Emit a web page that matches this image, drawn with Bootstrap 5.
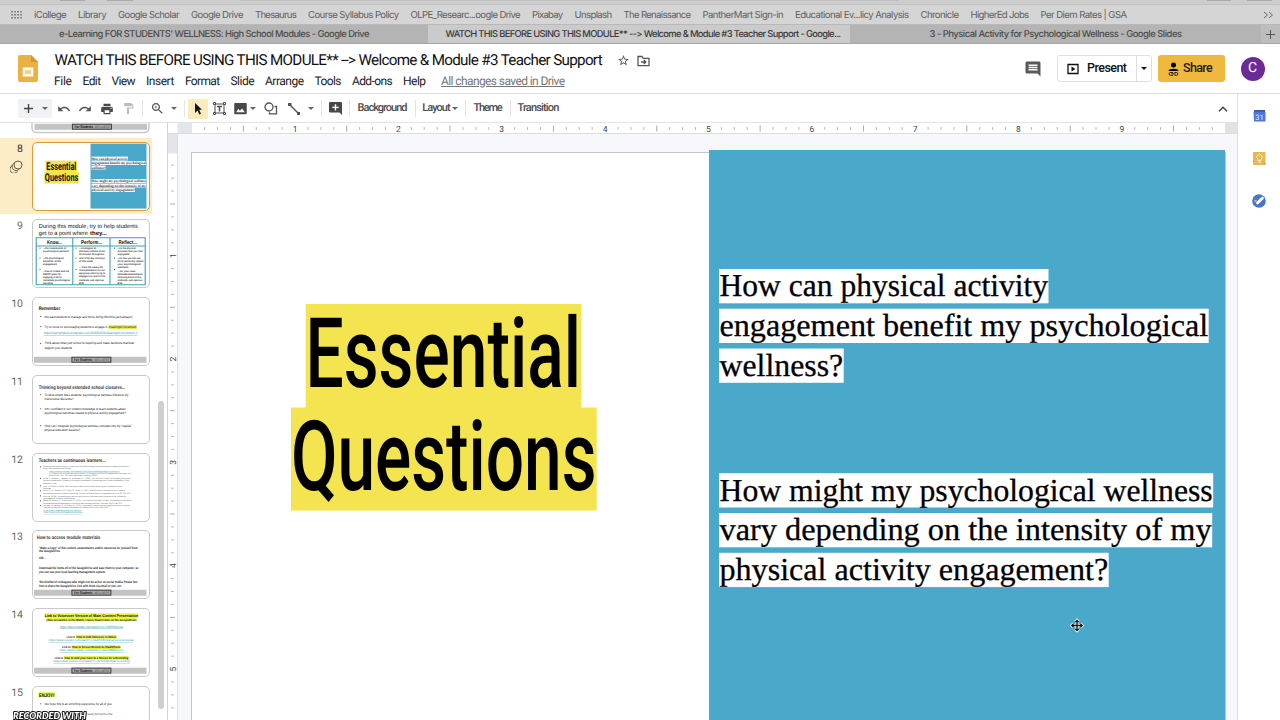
<!DOCTYPE html>
<html lang="en">
<head>
<meta charset="utf-8">
<title>Welcome &amp; Module #3 Teacher Support - Google Slides</title>
<link rel="stylesheet" href="https://cdn.jsdelivr.net/npm/bootstrap@5.3.0/dist/css/bootstrap.min.css">
<style>
body{width:1280px;height:720px;overflow:hidden;background:#fff;font-family:Roboto,"Liberation Sans",sans-serif;color:#222;text-rendering:geometricPrecision}
svg{display:block;flex:none}
svg text{text-rendering:geometricPrecision}
.fit{white-space:nowrap;display:inline-block;flex:none;font-variant-ligatures:none;font-feature-settings:"calt" 0}
.browser-edge{height:5px;background:#cdcdcd;border-bottom:1px solid #c2c2c2}
.bookmarks{height:19px;padding-left:34px;gap:12px;background:#d5d5d5;font:9.6px Inter,sans-serif;color:#606060;position:relative;padding-top:1px}
.apps-dots{position:absolute;left:11px;top:6px}
.more-marks{position:absolute;right:6px;top:6px}
.tabs{height:20px;font:500 9.4px Inter,sans-serif;color:#4c4c4c;background:#b4b4b4;border-top:1px solid #b9b9b9;border-bottom:1px solid #a6a6a6}
.tab-a{width:428px}.tab-b{width:422px;background:#cbcbcb;color:#3a3a3a}.tab-c{width:411px}.tab-plus{width:19px;background:#bdbdbd}
.doc-head{height:50px;border-bottom:1px solid #dcdcdc;padding-left:17.5px}
.doc-info{margin-left:17px;padding-top:7px}
.doc-title{height:19px;font-size:15.2px;line-height:19px;color:#111}
.menu-row{height:20px;gap:11px;font-size:12px;line-height:20px;color:#222;padding-top:1px;margin-left:-.5px}
.saved{color:#777;text-decoration:underline;margin-left:4.5px}
.btn-present,.btn-share{height:27px;font-size:12.5px;font-weight:500;border-radius:3px;padding:0}
.btn-present{width:95px;border:1px solid #dddfe3;color:#111;background:#fff}
.btn-present .split{width:15px;border-left:1px solid #dddfe3}
.btn-share{width:67px;background:#efb93f;color:#201a08;margin-left:6px}
.avatar{width:24px;height:24px;border-radius:50%;background:#6b2a96;color:#fff;font-size:14px;margin:0 15.5px 0 15.5px}
.work{height:626px}
.main-pane{width:1238px;border-right:1px solid #dfdfdf}
.side-pane{width:42px;padding-top:15px}
.toolbar-grid{height:29px;padding-left:18px;display:grid;grid-template-columns:20px 14px 24px 18px 26px 16px 12px 18px 15px 7px 20px 22px 20px 6px 30px 16px 18px 2px 26px 2px 64px 2px 48px 2px 43px 2px 54px 1fr 31px;font-size:11px;font-weight:500;color:#4c4d4f;border-bottom:1px solid #e2e3e5}
.toolbar-grid>*{display:flex;align-items:center;justify-content:center;height:29px}
.vline{width:1px;height:17px;background:#e4e4e4}
.new-a,.new-b{background:#f1f2f6;height:19px!important;align-self:center}
.picked{background:#fcebbd;height:20px!important;align-self:center}
.film{width:168px;height:597px;border-right:1px solid #d3d3d3;background:#fff;position:relative}
.film-row{width:152px;height:75.6px;margin-bottom:2.15px;padding-top:3.6px;font-size:10.5px;color:#666}
.film-row.active{background:#fcedc6;color:#333}
.film-num{width:31.5px;padding-right:8.500px;text-align:right;line-height:13px}
.film-thumb{width:118px;height:69px;border:1.5px solid #c9c9cd;border-radius:5px;overflow:hidden;background:#fff}
.active .film-thumb{border-color:#d99b3a}
.scroll-pill{position:absolute;right:3.500px;top:278px;width:6px;height:308px;border-radius:3px;background:#cfcfcf}
.stage{width:1069px;background:#f7f8fb}
.rec-mark{position:fixed;left:13px;top:709px;z-index:5}
</style>
</head>
<body class="d-flex flex-column">
<div class="browser-edge flex-shrink-0"><svg width="1280" height="2"><path d="M60 .5h25M107 .5h26M1207 .5h24M1247 .5h25" stroke="#aaa"/><path d="M240 .5h658" stroke="#bdbdbd"/></svg></div>
<div class="bookmarks d-flex align-items-center flex-shrink-0">
<svg class="apps-dots" width="12" height="8"><path d="M1 0v8M4 0v8M7 0v8M10 0v8" stroke="#666" stroke-width="1.4" stroke-dasharray="1.4 1.6"/></svg>
<span class="fit" data-w="32">iCollege</span><span class="fit" data-w="28">Library</span><span class="fit" data-w="61">Google Scholar</span><span class="fit" data-w="52">Google Drive</span><span class="fit" data-w="41">Thesaurus</span><span class="fit" data-w="90.5">Course Syllabus Policy</span><span class="fit" data-w="109.5">OLPE_Researc...oogle Drive</span><span class="fit" data-w="30.5">Pixabay</span><span class="fit" data-w="37">Unsplash</span><span class="fit" data-w="67">The Renaissance</span><span class="fit" data-w="80.5">PantherMart Sign-in</span><span class="fit" data-w="113.5">Educational Ev...licy Analysis</span><span class="fit" data-w="38">Chronicle</span><span class="fit" data-w="58">HigherEd Jobs</span><span class="fit" data-w="86">Per Diem Rates | GSA</span>
<svg class="more-marks" width="11" height="8"><path d="M1 1l3.5 3L1 7M6 1l3.5 3L6 7" fill="none" stroke="#666"/></svg>
</div>
<div class="tabs d-flex flex-shrink-0">
<div class="tab-a d-flex align-items-center justify-content-center"><span class="fit" data-w="310">e-Learning FOR STUDENTS' WELLNESS: High School Modules - Google Drive</span></div>
<div class="tab-b d-flex align-items-center justify-content-center ps-2"><span class="fit" data-w="395">WATCH THIS BEFORE USING THIS MODULE** --&gt; Welcome &amp; Module #3 Teacher Support - Google...</span></div>
<div class="tab-c d-flex align-items-center justify-content-center"><span class="fit" data-w="252">3 - Physical Activity for Psychological Wellness - Google Slides</span></div>
<div class="tab-plus d-flex align-items-center justify-content-center"><svg width="9" height="9"><path d="M4.5 0v9M0 4.5h9" stroke="#555"/></svg></div>
</div>
<header class="doc-head d-flex flex-shrink-0">
<svg width="20" height="27" viewBox="0 0 20 27" style="margin-top:11px"><path d="M2 0h11l7 7v18a2 2 0 0 1-2 2H2a2 2 0 0 1-2-2V2a2 2 0 0 1 2-2z" fill="#e9b243"/><path d="M13 0l7 7h-7z" fill="#d09a35"/><path d="M5.800 13.700h8.400v6.600H5.800z" fill="#f6d58a" stroke="#fff" stroke-width="2.200"/></svg>
<div class="doc-info">
<div class="doc-title d-flex align-items-center"><span class="fit" data-w="547.5">WATCH THIS BEFORE USING THIS MODULE** --&gt; Welcome &amp; Module #3 Teacher Support</span>
<svg style="margin-left:14.500px" width="13" height="13" viewBox="0 0 24 24" fill="#555"><path d="M22 9.240l-7.190-.62L12 2 9.190 8.630 2 9.240l5.460 4.730L5.820 21 12 17.270 18.180 21l-1.630-7.030L22 9.240zM12 15.400l-3.760 2.270 1-4.280-3.320-2.880 4.380-.38L12 6.100l1.710 4.040 4.380.38-3.320 2.880 1 4.280L12 15.400z"/></svg>
<svg style="margin-left:7px" width="13" height="12" viewBox="0 0 13 12" fill="none" stroke="#555" stroke-width="1.300"><path d="M1 2.200V1.500h4l1.200 1.900H12v7.200H1z"/><path d="M4 7h4.500M6.800 5l2 2-2 2"/></svg></div>
<nav class="menu-row d-flex"><span class="fit" data-w="17.5">File</span><span class="fit" data-w="18">Edit</span><span class="fit" data-w="23.5">View</span><span class="fit" data-w="28">Insert</span><span class="fit" data-w="34.5">Format</span><span class="fit" data-w="23.5">Slide</span><span class="fit" data-w="38.5">Arrange</span><span class="fit" data-w="26.5">Tools</span><span class="fit" data-w="40">Add-ons</span><span class="fit" data-w="22.5">Help</span><span class="fit saved" data-w="123.5">All changes saved in Drive</span></nav>
</div>
<div class="ms-auto d-flex align-items-center" style="height:49px">
<svg width="18" height="18" viewBox="0 0 24 24" fill="#58595b" style="margin-right:15px"><path d="M21.990 4c0-1.100-.89-2-1.990-2H4c-1.100 0-2 .9-2 2v12c0 1.100.9 2 2 2h14l4 4-.01-18zM18 14H6v-2h12v2zm0-3H6V9h12v2zm0-3H6V6h12v2z"/></svg>
<button class="btn btn-present d-flex align-items-center"><svg style="margin:0 8px 0 9px" width="12" height="12"><path d="M1 1.500h10v9H1z" fill="none" stroke="#111" stroke-width="1.300"/><path d="M4.500 3.600v4.800L8.500 6z" fill="#111"/></svg><span class="fit" data-w="39.5">Present</span><span class="split ms-auto h-100 d-flex align-items-center justify-content-center"><svg width="6" height="3"><path d="M0 0h6L3 3z" fill="#111"/></svg></span></button>
<button class="btn btn-share d-flex align-items-center"><svg style="margin:0 4px 0 9px" width="11" height="14"><circle cx="5.500" cy="3" r="2.500"/><path d="M.5 9c0-3 10-3 10 0z"/><path d="M5 10.500H2.500a1.400 1.400 0 0 0 0 2.800H5M6.500 10.500H8.500a1.400 1.400 0 0 1 0 2.800H6.500M3.500 11.900h4" fill="none" stroke="#201a08"/></svg><span class="fit" data-w="29">Share</span></button>
<div class="avatar d-flex align-items-center justify-content-center">C</div>
</div>
</header>
<div class="work d-flex flex-shrink-0">
<div class="main-pane">
<div class="toolbar-grid">
<span class="new-a"><svg width="9" height="9"><path d="M4.500 0v9M0 4.500h9" stroke="#444" stroke-width="1.400"/></svg></span>
<span class="new-b"><svg width="6" height="3"><path d="M0 0h6L3 3z" fill="#666"/></svg></span>
<span><svg width="14" height="14" viewBox="0 0 24 24" fill="#555"><path d="M12.500 8c-2.650 0-5.050.99-6.900 2.600L2 7v9h9l-3.620-3.620c1.390-1.160 3.160-1.880 5.120-1.880 3.540 0 6.550 2.310 7.600 5.500l2.370-.78C21.080 11.030 17.150 8 12.500 8z"/></svg></span>
<span><svg width="14" height="14" viewBox="0 0 24 24" fill="#555"><path d="M18.400 10.600C16.550 8.990 14.150 8 11.500 8c-4.650 0-8.580 3.030-9.960 7.220L3.900 16c1.050-3.190 4.050-5.500 7.600-5.500 1.950 0 3.730.72 5.120 1.880L13 16h9V7l-3.600 3.600z"/></svg></span>
<span><svg width="14" height="14" viewBox="0 0 24 24" fill="#484848"><path d="M19 8H5c-1.660 0-3 1.340-3 3v6h4v4h12v-4h4v-6c0-1.660-1.340-3-3-3zm-3 11H8v-5h8v5zm3-7c-.55 0-1-.45-1-1s.45-1 1-1 1 .45 1 1-.45 1-1 1zm-1-9H6v4h12V3z"/></svg></span>
<span><svg width="13" height="13" viewBox="0 0 24 24" fill="#bbb"><path d="M18 4V3c0-.55-.45-1-1-1H5c-.55 0-1 .45-1 1v4c0 .55.45 1 1 1h12c.55 0 1-.45 1-1V6h1v4H9v11c0 .55.45 1 1 1h2c.55 0 1-.45 1-1v-9h8V4h-3z"/></svg></span>
<span><i class="vline"></i></span>
<span><svg width="15" height="15" viewBox="0 0 24 24" fill="#555"><path d="M15.500 14h-.79l-.28-.27C15.410 12.590 16 11.110 16 9.500 16 5.910 13.090 3 9.500 3S3 5.910 3 9.500 5.910 16 9.500 16c1.610 0 3.090-.59 4.230-1.570l.27.28v.79l5 4.990L20.490 19l-4.990-5zm-6 0C7.010 14 5 11.990 5 9.500S7.010 5 9.500 5 14 7.010 14 9.500 11.990 14 9.500 14zm2.500-4h-2v2H9v-2H7V9h2V7h1v2h2v1z"/></svg></span>
<span><svg width="6" height="3"><path d="M0 0h6L3 3z" fill="#666"/></svg></span>
<span><i class="vline"></i></span>
<span class="picked"><svg width="9" height="12"><path d="M1 0l7 6.800H5.200L7 10.700 5.300 11.500 3.600 7.500 1 10z" fill="#111"/></svg></span>
<span><svg width="13" height="13" fill="none" stroke="#4d4d4d"><path d="M2 2h9v9H2z"/><path d="M4 4.500h5M6.500 4.500v5" stroke-width="1.500"/><path d="M.5.5h2v2h-2zM10.500.5h2v2h-2zM.5 10.500h2v2h-2zM10.500 10.500h2v2h-2z" fill="#fff"/></svg></span>
<span><svg width="15" height="15" viewBox="0 0 24 24" fill="#484848"><path fill-rule="evenodd" d="M22 19.500V4.500c0-1-.9-1.500-1.500-1.500h-17C2.500 3 2 3.800 2 4.500v15c0 1 .8 1.500 1.500 1.500h17c1 0 1.500-.9 1.500-1.500zM8.500 12.500l2.500 3L14.500 12l4.500 6H5z"/></svg></span>
<span><svg width="6" height="3"><path d="M0 0h6L3 3z" fill="#666"/></svg></span>
<span><svg width="14" height="13" fill="none" stroke="#555" stroke-width="1.300"><circle cx="5" cy="5" r="4"/><path d="M10.500 4.500h2v7.300H5.500v-1.500"/></svg></span>
<span><svg width="12" height="12"><path d="M2 2l8.500 8.500" stroke="#555" stroke-width="1.400"/><path d="M0 0h3.500v3H0zM9 9h3v3H9z" fill="#555"/></svg></span>
<span><svg width="6" height="3"><path d="M0 0h6L3 3z" fill="#666"/></svg></span>
<span><i class="vline"></i></span>
<span><svg width="13" height="13"><path d="M1 0h11a1 1 0 0 1 1 1v12l-2.500-2.500H1a1 1 0 0 1-1-1V1a1 1 0 0 1 1-1z" fill="#484848"/><path d="M6.500 2.200v6.400M3.300 5.400h6.400" stroke="#fff" stroke-width="1.400"/></svg></span>
<span><i class="vline"></i></span>
<span><b class="fit fw-medium" data-w="49">Background</b></span>
<span><i class="vline"></i></span>
<span><b class="fit fw-medium" data-w="27.5">Layout</b><svg style="margin-left:2px" width="6" height="3"><path d="M0 0h6L3 3z" fill="#666"/></svg></span>
<span><i class="vline"></i></span>
<span><b class="fit fw-medium" data-w="28">Theme</b></span>
<span><i class="vline"></i></span>
<span><b class="fit fw-medium" data-w="41">Transition</b></span>
<span></span>
<span class="pe-0"><svg style="margin-left:2px" width="10" height="6"><path d="M1 5.300l4-4 4 4" fill="none" stroke="#444" stroke-width="1.500"/></svg></span>
</div>
<div class="d-flex">
<aside class="film overflow-hidden" id="film"><div class="scroll-pill"></div></aside>
<svg class="stage" id="stage" width="1069" height="597" viewBox="168 123 1069 597"></svg>
</div>
</div>
<aside class="side-pane d-flex flex-column align-items-center">
<svg width="13" height="13"><path d="M1 1h11v3H1z" fill="#3c5fb8"/><path d="M.5 3h12v9.500H1z" fill="#4a78dc"/><text x="2.300" y="10.500" font-size="7.500" fill="#e6eeff" font-family="Roboto">31</text></svg>
<svg width="13" height="13" style="margin-top:29.500px"><path d="M1 0h11.500v9L9.500 13H1a1 1 0 0 1-1-1V1a1 1 0 0 1 1-1z" fill="#e6b94c"/><path d="M12.500 9.200v3.600H9.500z" fill="#c99526"/><path d="M5 8.500V7.200a2.600 2.600 0 1 1 3 0v1.300zM5 10.200h3" fill="none" stroke="#fdf0cc"/></svg>
<svg width="14" height="14" style="margin-top:29px"><circle cx="7" cy="7" r="6.800" fill="#4475d4"/><path d="M5.500 9l5-5" stroke="#fff" stroke-width="2.800" stroke-linecap="round"/><circle cx="3.600" cy="7" r="1.300" fill="#dcb353"/></svg>
</aside>
</div>
<svg class="rec-mark" width="76" height="11"><text x="0" y="10" font-family="Lato,Roboto,sans-serif" font-weight="900" font-style="italic" font-size="9.500" textLength="73" lengthAdjust="spacingAndGlyphs" fill="#fff" stroke="#1a1a1a" stroke-width="2.200" paint-order="stroke" stroke-linejoin="round">RECORDED WITH</text></svg>
<script>
const esc = s => s.replace(/&/g,'&amp;').replace(/</g,'&lt;');
const SANS = "'Liberation Sans',Arial,sans-serif";
// One line of slide text: left, baseline, advance width, size, string, extra attributes.
function T(x, y, w, size, s, extra = '') {
  return `<text x="${x}" y="${y}" textLength="${w}" lengthAdjust="spacingAndGlyphs" font-size="${size}" ${extra}>${esc(s)}</text>`;
}
const R = (x, y, w, h, fill, extra = '') => `<rect x="${x}" y="${y}" width="${w}" height="${h}" fill="${fill}" ${extra}/>`;
const dot = (x, y) => `<circle cx="${x}" cy="${y}" r=".6" fill="#444"/>`;
const link = 'fill="#2b96a5" text-decoration="underline"';
const footer = y => R(34.5, y, 112.5, 6, '#c3c3c3') + R(72.4, y + .4, 39, 5, '#aaa', 'stroke="#333" stroke-width=".9"') +
  T(74.5, y + 4.3, 18.5, 3.8, 'For Students', 'font-weight="700"') + T(94.8, y + 4.3, 14.7, 3.4, 'WELLNESS', 'fill="#444"');

// The full-size slide.
const slide = R(709, 150, 516, 584, '#4aa9cb') +
  R(305.7, 304, 275.8, 104, '#f3e450') + R(291, 407.5, 305.7, 103, '#f3e450') +
  `<g font-family="Roboto" font-weight="500" fill="#000">` +
  T(305.5, 386.5, 275.5, 97.5, 'Essential') + T(291, 490, 305.5, 97.5, 'Questions') + '</g>' +
  [[269,329.5,'How can physical activity'],[308.7,489.7,'engagement benefit my psychological'],[348.5,124.7,'wellness?'],
   [473.2,494.2,'How might my psychological wellness'],[513,493.2,'vary depending on the intensity of my'],[552.8,389.7,'physical activity engagement?']]
  .map(([y, w, s]) => R(719, y, w, 34.3, '#fff') + T(719.5, y + 27.3, w - 1, 32, s, `font-family="'Liberation Serif',serif" fill="#000" stroke="#000" stroke-width=".3"`)).join('');

const thumbs = {
  8: R(91, 144.5, 56, 65, '#4aa9cb') + R(46, 161.5, 31.5, 12, '#f3e450') + R(44.8, 173, 34.5, 11.5, '#f3e450') +
     '<g font-family="Roboto" font-weight="700" fill="#111">' + T(46.8, 170.9, 30, 10.8, 'Essential') + T(45.3, 182.4, 33.500, 10.8, 'Questions') + '</g>' +
     [[157.5,36.5,'How can physical activity'],[162,54.5,'engagement benefit my psychological'],[166.5,14,'wellness?'],[180,54.5,'How might my psychological wellness'],[184.5,54.5,'vary depending on the intensity of my'],[189,43.5,'physical activity engagement?']]
     .map(([y, w, s]) => R(92, y, w, 3.9, '#f4f8fa') + T(92, y + 3.1, w, 3.5, s, `font-family="'Liberation Serif',serif" font-weight="700" fill="#444"`)).join(''),
  9: T(39.3, 229.4, 99, 5.9, 'During this module, try to help students') + T(39.3, 236.4, 49, 5.9, 'get to a point where') + T(90.500, 236.4, 17, 5.9, 'they...', 'font-weight="700"') +
     '<path d="M36.700 238.700h109v47h-109zM36.700 247h109M73.300 238.700v47M110.500 238.700v47" fill="none" stroke="#3f9fb0" stroke-width="1.100"/>' +
     T(47.5, 244.900, 15, 5.4, 'Know...', 'font-weight="700"') + T(81.500, 244.900, 21, 5.4, 'Perform...', 'font-weight="700"') + T(119, 244.900, 18.5, 5.4, 'Reflect...', 'font-weight="700"') +
     [[43.5,[250,23,'...the components of'],[253.2,26,'psychological wellness'],[259.5,21,'...the psychological'],[262.7,18,'benefits of PA'],[266,14,'engagement'],[272.500,26,'...how to create and set'],[275.7,18,'SMART goals for'],[278.8,19,'engaging in PA for'],[281.8,27,'immediate psychological'],[284.7,10,'benefits']],
      [79.500,[250,17,'...strategies to'],[253.200,26,'potentially balance stress'],[256.400,25,'30 minutes throughout'],[259.600,26,'most of the day, most days'],[262.800,14,'of the week'],[268.500,24,'..."track the weekly PA'],[271.700,26,'recommendations for your'],[275,26,'age group while trying to'],[278.300,26,'engage in a rest of the'],[281.500,25,'moderate, and vigorous'],[284.700,5,'PA']],
      [118,[250,18,'...on the physical'],[253.200,25,'activities that you find'],[256.400,12,'enjoyable'],[259.600,23,'...on how you can use'],[262.800,26,'PA to positively impact'],[266,23,'your psychological'],[269.200,11,'wellness'],[272.500,18,'...on your own'],[275.700,25,'attitudes/emotions'],[278.800,24,'following bouts of low,'],[281.800,25,'moderate, and vigorous'],[284.700,5,'PA']]]
     .map(([x, ...ls]) => dot(x - 3, 249) + dot(x - 3, 259) + dot(x - 3, 270.5) + ls.map(([y, w, s]) => T(x, y, w, 2.6, s, 'font-weight="700" fill="#333"')).join('')).join(''),
  10: T(39.3, 311.200, 21.500, 5, 'Remember', 'font-weight="700"') + dot(41.2, 317.2) + T(45, 318.600, 88, 3.3, 'We want students to manage and thrive during this time (and always!)') +
      dot(41.2, 327.3) + T(45, 328.600, 63, 3.3, 'Try to focus on encouraging students to engage in') + R(109, 325.800, 28.2, 3.900, '#e5ed55') + T(109.3, 328.600, 27.500, 3.3, 'meaningful movement') +
      T(44.3, 335.200, 93.5, 3.3, 'https://openphysed.wordpress.com/2020/03/29/meaningful-movement-2', link) +
      dot(41.2, 344) + T(45, 345.2, 89.500, 3.3, 'Think about what your school is requiring and make decisions that best') + T(45, 349.3, 27.500, 3.3, 'support your students') + footer(357.500),
  11: T(39.3, 389, 86.500, 5, 'Thinking beyond extended school closures...', 'font-weight="700" fill="#333"') +
      dot(41.2, 395) + T(45, 396.500, 84, 3.200, 'To what extent does students’ psychological wellness influence my') + T(45, 400.300, 29, 3.200, 'instructional decisions?') +
      dot(41.2, 409.2) + T(45, 410.500, 81, 3.200, 'Am I confident in our content knowledge to teach students about') + T(45, 414.400, 81.500, 3.200, 'psychological outcomes related to physical activity engagement?') +
      dot(41.2, 426) + T(45, 427.300, 87.500, 3.200, 'How can I integrate psychological wellness concepts into my “regular”') + T(45, 431.200, 35.500, 3.200, 'physical education lessons?'),
  12: T(39.3, 462, 67, 5, 'Teachers as continuous learners...', 'font-weight="700" fill="#222"') + '<g fill="#555">' +
      [[467.300,43.500,86.500,'Confident professionals acquired in making the PHYS/Kinesiology Physical Education or Adapted Education the'],[469.600,43.500,28,'Core Needs Benefits Work'],[472,49.500,70.500,'https://www.youtube.com/watch?v=2020/HealthEducation/resources'],[474.200,49.500,82,'J.T. Competence of health and fitness (Routine) in Response to COVID-19 Engagement, Education, and'],[476.400,49.500,48,'Wellness, vol. 23 (international edition) 2020'],[479.300,43.500,87.500,'Tudor, S., Howard, T., Bradley, E., & Gallagher, T. (2019). The effect of exercise on managing stress and'],[481.700,43.500,86,'effects on academics. Quarterly Research in Education, Psychology and Teacher Education, 12(4)'],[484,43.500,14,'Publisher, Inc.'],[486.900,43.500,79,'Lubs, C. & Smith, R. (2018). Wellness skills in middle school & high school physical education students'],[489,43.500,8,'Journal'],[491.700,43.500,82,'Pfeifer, C. A., Sanford, H. W., Pfug, G., White, S. (2017). Effectiveness of a comprehensive nutrition'],[494,43.500,87,'Professional wellness teachers workshop. College of Human Sciences Education Review, 12, 300-312'],[496.800,43.500,83,'Shen, B. (2018). Physical activity and overall wellness, motivation and emotions in PE. A Midwest'],[499.100,43.500,32,'International Journal of Education'],[501.600,43.500,88.500,'Wang, G., Howell, L., & Anderson, S. (2016). The effects of aerobic exercise in reducing overall stress'],[503.900,43.500,79,'international multidisciplinary resources and learning studies. Journal, 10(2) 245-270'],[506.300,43.500,87,'Thomas, M., Benton, C. & Collins, D. (2015). Immediate health benefits of physical activity in school'],[508.500,43.500,65,'Journal of School Health. Education in School Reviews 341-352']]
      .map(([y, x, w, s]) => T(x, y, w, 1.900, s, y === 472 ? link : '')).join('') + '</g>' + dot(41, 467) + dot(41, 478.500) + dot(41, 486) + dot(41, 491) + dot(41, 496) + dot(41, 501) + dot(41, 505.700) + T(44, 510.800, 38, 2, 'https://www.shapeamerica.org/teachers', link) + T(44, 513.200, 39, 2, 'https://www.cdc.gov/healthyschools/pe', link),
  13: T(37.3, 540.300, 63.500, 5, 'How to access module materials', 'font-weight="700" fill="#333"') +
      [[549.500,98.500,'"Make a Copy" of this content, assessments, and/or resources for yourself from'],[553.400,21,'the GoogleDrive'],[559.500,6.500,'OR...'],[569.800,99.500,'Download the items off of the GoogleDrive and save them to your computer, so'],[573.800,66,'you can use your local learning management system'],[583.800,98.500,'*Be mindful of colleagues who might not be active on social media. Please feel'],[587.700,83,'free to share the GoogleDrive Link with them via email or text, etc.']]
      .map(([y, w, s]) => T(39.500, y, w, 3.300, s, 'font-weight="700" fill="#222"')).join('') + footer(590.700),
  14: R(45.300, 614, 93.300, 4.500, '#e6f14a') + T(45.300, 617.700, 93.300, 3.900, 'Link to Voiceover Version of Main Content Presentation', 'font-weight="700"') + R(47, 618.400, 90, 3.300, '#e6f14a') + T(47, 621.400, 90, 2.900, '(Also accessible in the Watch, Listen, Read Folder on the GoogleDrive)', 'font-weight="700"') +
      T(60.500, 628.300, 63, 3.200, 'https://www.youtube.com/watch?v=u7VNPR29Jxxw', link) +
      [[638.500,67,9,117,'How to Add Voiceover in iMovie'],[649,62.500,9,121,'How to Screen Record on iPad/iPhone'],[659.500,55,9,129,'How to Add your Face to a Screen for a Recording']]
      .map(([y, x, w, end, s], i) => T(x, y, w - .5, 3, 'Link to', 'font-weight="700"') + R(x + w + .5, y - 2.900, end - x - w - .5, 3.700, '#e6f14a') + T(x + w + 1, y, end - x - w - 1, 3, s, 'font-weight="700"') +
      T([49.500,60,54][i], y + 3.200, [84.500,64,76][i], 2.800, 'https://www.youtube.com/watch?v=' + ['cGOTmfEcbwIaVoiceovertutorial','pGxmfRWscreen','xU4mKQ2dVfacerecording'][i], link)).join('') + footer(668.400),
  15: R(39, 692.700, 16.500, 5, '#e6f14a') + T(39.500, 697.300, 15.500, 5.200, 'ENJOY!', 'font-weight="700"') + dot(41.2, 704.200) + T(45, 705.500, 67, 3.400, 'We hope this is an enriching experience for all of you') + T(88, 715.800, 25, 3.200, 'easily during this time', 'fill="#555"'),
};
let film = `<svg width="152" height="15" viewBox="0 123.500 152 15" font-family="${SANS}">${footer(124.3)}<path d="M32 120v8.500a4.500 4.500 0 0 0 4.500 4.500h108a4.500 4.500 0 0 0 4.500-4.500V120" fill="none" stroke="#c9c9cd" stroke-width="1.500"/></svg>`;
Object.keys(thumbs).forEach((n, i) => {
  const top = 142.4 + i * 77.75 - (i ? .7 : 0);
  film += `<div class="film-row d-flex ${n === '8' ? 'active' : ''}"><div class="film-num">${n}${n === '8' ? '<svg style="margin:5px 0 0 10px" width="13" height="13" fill="none" stroke="#665c45" ><circle cx="8" cy="5" r="4"/><path d="M4 3.200a4 4 0 1 0 5.500 5.500M2.500 5.500a4 4 0 1 0 5 5.500"/></svg>' : ''}</div>` +
    `<div class="film-thumb"><svg width="115" height="66" viewBox="33.500 ${top + 1.5} 115 66" font-family="${SANS}" fill="#111">${thumbs[n]}</svg></div></div>`;
});
document.getElementById('film').insertAdjacentHTML('afterbegin', film);

// Rulers: an inch is 103.35px, with ticks at every eighth.
const inch = 103.35;
let s = R(168, 123, 1069, 10, '#fff') + R(168, 123, 9.500, 597, '#fff') + R(177.500, 123, 14.500, 10, '#e4e5ea') + R(1225, 123, 13, 10, '#e2e2e2') + R(168, 133.500, 9, 20, '#e4e5ea') +
  '<path d="M168 133.500h1069M177.500 133.500V720" stroke="#dcdde1"/>';
for (let i = 1; i < 80; i++) {
  const x = 191.7 + i * inch / 8, y = 152.300 + i * inch / 8;
  const len = i % 4 ? 1.500 : 3;
  if (i % 8) {
    s += `<path d="M${x} ${128.500 - len}v${len * 2}" stroke="${i % 4 ? '#bbb' : '#aaa'}"/>`;
    if (y < 720) s += `<path d="M${172.500 - len * .8} ${y}h${len * 1.600}" stroke="#aaa"/>`;
  } else {
    s += `<text x="${x}" y="131.500" text-anchor="middle" font-size="8.500" font-family="Roboto" fill="#444">${i / 8}</text>`;
    if (y < 720) s += `<text transform="translate(175.500 ${y}) rotate(-90)" text-anchor="middle" font-size="8.500" font-family="Roboto" fill="#444">${i / 8}</text>`;
  }
}
s += R(191.500, 152.500, 1034, 600, '#fff', 'stroke="#c4c4c6"') + slide;
s += '<g transform="translate(1077 625.500)" fill="none"><path d="M0-5v10M-5 0H5M-1.700-3.500L0-5.200 1.700-3.500M-1.700 3.500L0 5.200 1.700 3.500M-3.500-1.700L-5.200 0-3.500 1.700M3.500-1.700L5.200 0 3.500 1.700" stroke="#fff" stroke-width="3"/><path d="M0-5v10M-5 0H5M-1.700-3.500L0-5.200 1.700-3.500M-1.700 3.500L0 5.200 1.700 3.500M-3.500-1.700L-5.200 0-3.500 1.700M3.500-1.700L5.200 0 3.500 1.700" stroke="#111" stroke-width="1.300"/></g>';
document.getElementById('stage').innerHTML = s;

// Track each label out or in to its set width.
document.querySelectorAll('.fit').forEach(e => {
  const w = +e.dataset.w, nat = e.getBoundingClientRect().width;
  e.style.letterSpacing = (w - nat) / e.textContent.length + 'px';
});
</script>
<script src="https://cdn.jsdelivr.net/npm/bootstrap@5.3.0/dist/js/bootstrap.bundle.min.js"></script>
</body>
</html>
